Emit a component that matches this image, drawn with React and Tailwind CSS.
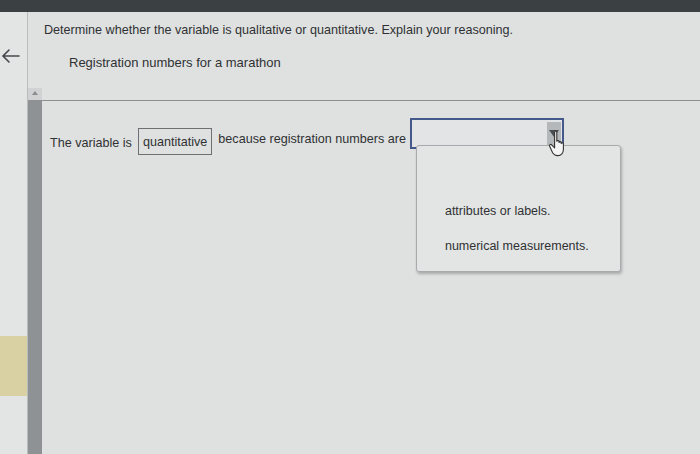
import React from "react";

function HandCursor() {
  return (
    <svg width="22" height="29" viewBox="0 0 20 26" className="absolute left-[138px] top-[11px]">
      <path
        d="M6 2.5c0-1.2 2-1.2 2 0V11c0-.9 2-.9 2 0v1c0-.9 2-.9 2 0v1c0-.9 2-.9 2 0v5.5c0 3-2 5.5-5 5.5H8.5c-2 0-3.3-1-4.3-2.6L1.5 15.5c-.7-1.2.9-2.2 1.8-1.2L6 17V2.5z"
        fill="#f4f4f4"
        stroke="#333"
        strokeWidth="1"
        strokeLinejoin="round"
      />
    </svg>
  );
}

export default function App() {
  return (
    <div
      className="flex h-[454px] w-[700px] flex-col overflow-hidden bg-[#dfe1e1] text-[#2f3133]"
      style={{ fontFamily: '"Liberation Sans", Arial, sans-serif' }}
    >
      <div className="h-[12px] w-full bg-[#3b4043]" />

      <div className="flex flex-1">
        {/* left rail */}
        <div className="flex w-[28px] flex-col border-r border-[#b9bcbd] bg-[#e3e4e4]">
          <div className="mt-[36px] flex justify-center pr-[6px]">
            <svg width="20" height="16" viewBox="0 0 20 16" fill="none" stroke="#45494c" strokeWidth="1.6" strokeLinecap="round">
              <path d="M18 8H2M8 2L2 8l6 6" />
            </svg>
          </div>
          <div className="mt-[272px] h-[60px] w-full bg-[#d9d1a4]" />
        </div>

        {/* scrollbar */}
        <div className="flex w-[14px] flex-col pt-[76px]">
          <div className="flex h-[12px] items-start justify-center bg-[#d0d2d3] pt-[3px]">
            <div className="h-0 w-0 border-x-[3px] border-b-[4px] border-x-transparent border-b-[#8a8d8f]" />
          </div>
          <div className="flex-1 bg-[#8f9294]" />
        </div>

        {/* content */}
        <div className="flex flex-1 flex-col">
          <div className="ml-[2px] mt-[10px] text-[12.6px] leading-[16px]">
            Determine whether the variable is qualitative or quantitative. Explain your reasoning.
          </div>
          <div className="ml-[27px] mt-[17px] text-[13px] leading-[16px]">
            Registration numbers for a marathon
          </div>
          <div className="ml-[-2px] mt-[29px] h-px bg-[#8c8f91]" />

          <div className="ml-[8px] mt-[17px] flex items-start text-[12.6px] leading-[16px]">
            <span className="mt-[17px]">The variable is</span>
            <span className="ml-[6px] mt-[10px] flex h-[27px] items-center border border-[#6d7073] px-[4px]">
              quantitative
            </span>
            <span className="ml-[6px] mt-[13px]">because registration numbers are</span>
            <div className="relative ml-[4px]">
              <div className="flex h-[31px] w-[154px] items-center justify-end border-2 border-[#44588c] bg-[#e2e4e5] pr-[1px]">
                <div className="flex h-[24px] w-[14px] items-center justify-center bg-[#b5b8ba]">
                  <div className="h-0 w-0 border-x-[5px] border-t-[7px] border-x-transparent border-t-[#4a4e52]" />
                </div>
              </div>
              <div className="absolute left-[6px] top-[27px] flex h-[127px] w-[205px] flex-col rounded-[3px] border border-[#a8abad] bg-[#e3e5e5] pl-[28px] pt-[57px] shadow-[1px_2px_3px_rgba(0,0,0,0.25)]">
                <div className="text-[12.5px] leading-[16px]">attributes or labels.</div>
                <div className="mt-[19px] text-[12.5px] leading-[16px]">numerical measurements.</div>
              </div>
              <HandCursor />
            </div>
          </div>
        </div>
      </div>
    </div>
  );
}
